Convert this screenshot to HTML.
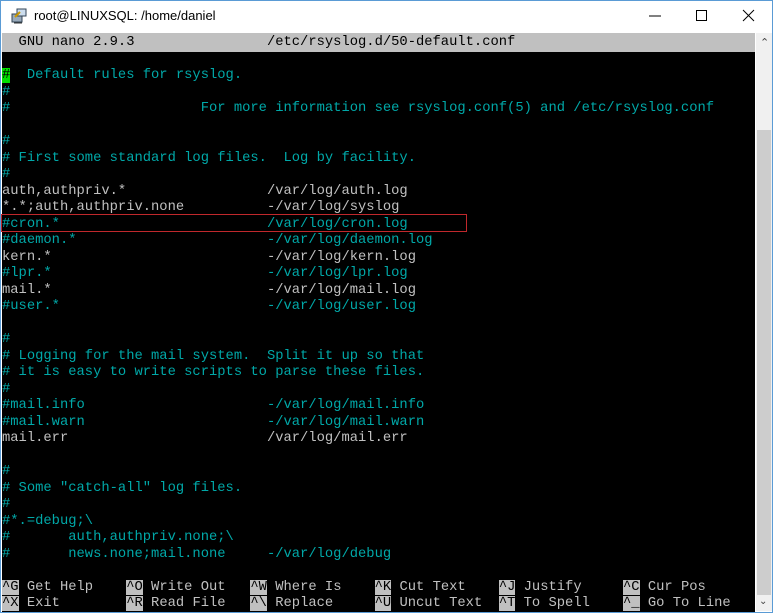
<!DOCTYPE html>
<html><head><style>
body{margin:0;width:773px;height:613px;overflow:hidden;background:#fff;font-family:"Liberation Sans",sans-serif;position:relative}
.win{position:absolute;left:0;top:0;width:771px;height:611px;border:1px solid #5a9bd5;background:#fff}
.title{position:absolute;left:34px;top:8px;font-size:13px;color:#000}
.term{position:absolute;left:2px;top:33px;width:753px;height:579px;background:#000;overflow:hidden}
pre{margin:0;padding-top:2px;font-family:"Liberation Mono",monospace;font-size:13.8px;line-height:16.5px;color:#c0c0c0;white-space:pre}
.c{color:#00a8a8}
.h{background:#c0c0c0;color:#000;display:block;margin-top:-2px;padding-top:2px}
.k{background:#c0c0c0;color:#000}
.g{background:#00e000;color:#000}
.sb{position:absolute;left:756px;top:33px;width:16px;height:578px;background:#f0f0f0}
.th{position:absolute;left:757px;top:130px;width:14px;height:465px;background:#cdcdcd}
</style></head><body>
<div class="win"></div>
<svg style="position:absolute;left:10px;top:7px" width="18" height="18" viewBox="0 0 18 18"><rect x="2" y="7" width="10" height="8" fill="#9ab" stroke="#345"/><rect x="7" y="2" width="9" height="7" fill="#cde" stroke="#345"/><path d="M4 16h8" stroke="#333"/><path d="M10 5l-5 5" stroke="#c90" stroke-width="2"/></svg>
<div class="title">root@LINUXSQL: /home/daniel</div>
<svg style="position:absolute;left:640px;top:6px" width="130" height="20"><path d="M9 10h12" stroke="#000"/><rect x="56.5" y="4.5" width="10" height="10" fill="none" stroke="#000"/><path d="M103 4l11 11M114 4l-11 11" stroke="#000"/></svg>
<div class="term"><pre><span class="h">  GNU nano 2.9.3                /etc/rsyslog.d/50-default.conf                             </span>
<span class="g">#</span><span class="c">  Default rules for rsyslog.
#
#                       For more information see rsyslog.conf(5) and /etc/rsyslog.conf

#
# First some standard log files.  Log by facility.
#</span>
auth,authpriv.*                 /var/log/auth.log
*.*;auth,authpriv.none          -/var/log/syslog
<span class="c">#cron.*                         /var/log/cron.log
#daemon.*                       -/var/log/daemon.log</span>
kern.*                          -/var/log/kern.log
<span class="c">#lpr.*                          -/var/log/lpr.log</span>
mail.*                          -/var/log/mail.log
<span class="c">#user.*                         -/var/log/user.log

#
# Logging for the mail system.  Split it up so that
# it is easy to write scripts to parse these files.
#
#mail.info                      -/var/log/mail.info
#mail.warn                      -/var/log/mail.warn</span>
mail.err                        /var/log/mail.err
<span class="c">
#
# Some "catch-all" log files.
#
#*.=debug;\
#       auth,authpriv.none;\
#       news.none;mail.none     -/var/log/debug</span>

<span class="k">^G</span> Get Help    <span class="k">^O</span> Write Out   <span class="k">^W</span> Where Is    <span class="k">^K</span> Cut Text    <span class="k">^J</span> Justify     <span class="k">^C</span> Cur Pos
<span class="k">^X</span> Exit        <span class="k">^R</span> Read File   <span class="k">^\</span> Replace     <span class="k">^U</span> Uncut Text  <span class="k">^T</span> To Spell    <span class="k">^_</span> Go To Line</pre></div>
<div style="position:absolute;left:1px;top:214px;width:464px;height:16px;border:1.5px solid #c0282c"></div>
<div class="sb"></div><div class="th"></div>
<div style="position:absolute;left:760px;top:36px;font-size:11px;color:#444">&#8963;</div>
<div style="position:absolute;left:759px;top:596px;font-size:10px;color:#444">&#8964;</div>
</body></html>
